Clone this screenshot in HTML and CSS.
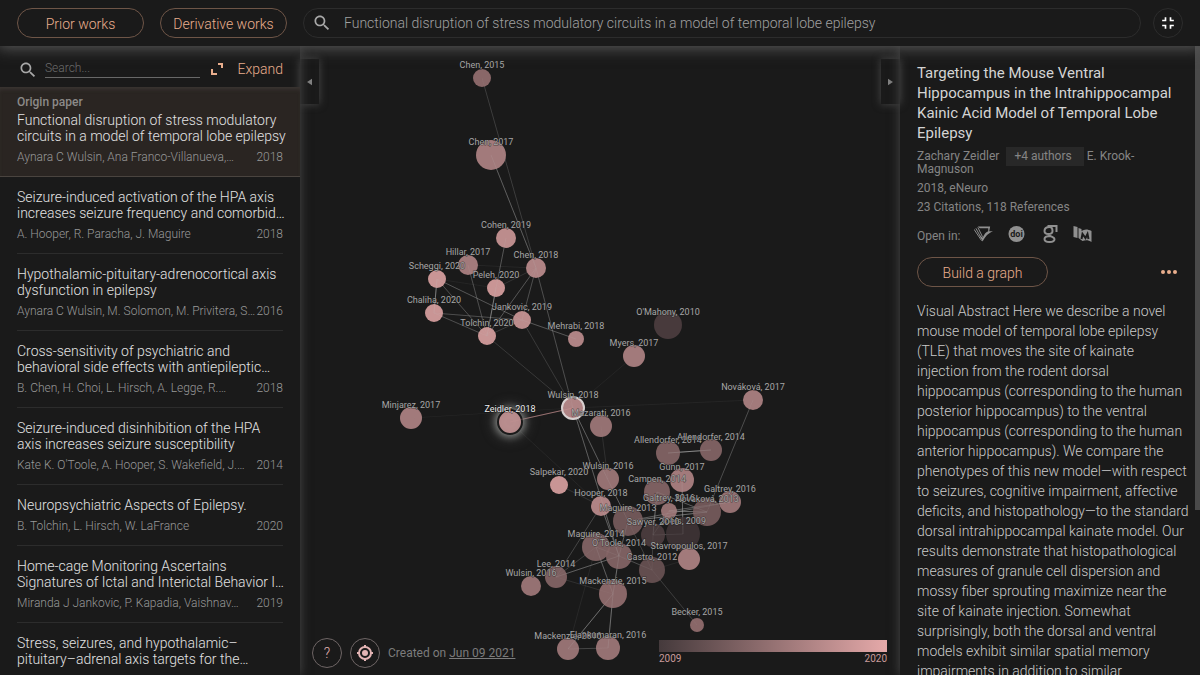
FILE: index.html
```
<!DOCTYPE html>
<html lang="en">
<head>
    <meta charset="UTF-8">
    <meta name="viewport" content="width=device-width, initial-scale=1.0">
    <title>Connected papers graph</title>
    <link rel="stylesheet" href="styles.css">
</head>
<body>
    <header class="topbar">
        <button class="pill">Prior works</button>
        <button class="pill">Derivative works</button>
        <label class="main-search">
            <svg class="search-icon" viewBox="0 0 24 24"><path d="M15.5 14h-.79l-.28-.27C15.41 12.59 16 11.11 16 9.5 16 5.91 13.09 3 9.5 3S3 5.91 3 9.5 5.91 16 9.5 16c1.61 0 3.09-.59 4.23-1.57l.27.28v.79l5 4.99L20.49 19l-4.99-5zm-6 0C7.01 14 5 11.99 5 9.5S7.01 5 9.5 5 14 7.01 14 9.5 11.99 14 9.5 14z"/></svg>
            <input type="text" aria-label="Search papers" value="Functional disruption of stress modulatory circuits in a model of temporal lobe epilepsy">
        </label>
        <button class="round-button" aria-label="Exit full screen">
            <svg viewBox="0 0 24 24"><path d="M5 16h3v3h2v-5H5v2zm3-8H5v2h5V5H8v3zm6 11h2v-3h3v-2h-5v5zm2-11V5h-2v5h5V8h-3z"/></svg>
        </button>
    </header>

    <main>
        <aside class="sidebar">
            <div class="filter">
                <label class="filter-label">
                    <svg class="search-icon" viewBox="0 0 24 24"><path d="M15.5 14h-.79l-.28-.27C15.41 12.59 16 11.11 16 9.5 16 5.91 13.09 3 9.5 3S3 5.91 3 9.5 5.91 16 9.5 16c1.61 0 3.09-.59 4.23-1.57l.27.28v.79l5 4.99L20.49 19l-4.99-5zm-6 0C7.01 14 5 11.99 5 9.5S7.01 5 9.5 5 14 7.01 14 9.5 11.99 14 9.5 14z"/></svg>
                    <input type="text" aria-label="Filter list" placeholder="Search...">
                </label>
                <button class="expand">
                    <svg viewBox="0 0 12 12"><path d="M1 6v5h5M7 1h4v4"/></svg>
                    Expand
                </button>
            </div>
            <ul class="papers">
                <li class="paper origin">
                    <strong>Origin paper</strong>
                    <h3>Functional disruption of stress modulatory circuits in a model of temporal lobe epilepsy</h3>
                    <p><span>Aynara C Wulsin, Ana Franco-Villanueva,…</span><span>2018</span></p>
                </li>
                <li class="paper">
                    <h3>Seizure-induced activation of the HPA axis increases seizure frequency and comorbid…</h3>
                    <p><span>A. Hooper, R. Paracha, J. Maguire</span><span>2018</span></p>
                </li>
                <li class="paper">
                    <h3>Hypothalamic-pituitary-adrenocortical axis dysfunction in epilepsy</h3>
                    <p><span>Aynara C Wulsin, M. Solomon, M. Privitera, S…</span><span>2016</span></p>
                </li>
                <li class="paper">
                    <h3>Cross-sensitivity of psychiatric and behavioral side effects with antiepileptic…</h3>
                    <p><span>B. Chen, H. Choi, L. Hirsch, A. Legge, R.…</span><span>2018</span></p>
                </li>
                <li class="paper">
                    <h3>Seizure-induced disinhibition of the HPA<br>axis increases seizure susceptibility</h3>
                    <p><span>Kate K. O'Toole, A. Hooper, S. Wakefield, J.…</span><span>2014</span></p>
                </li>
                <li class="paper">
                    <h3>Neuropsychiatric Aspects of Epilepsy.</h3>
                    <p><span>B. Tolchin, L. Hirsch, W. LaFrance</span><span>2020</span></p>
                </li>
                <li class="paper">
                    <h3>Home-cage Monitoring Ascertains Signatures of Ictal and Interictal Behavior I…</h3>
                    <p><span>Miranda J Jankovic, P. Kapadia, Vaishnav…</span><span>2019</span></p>
                </li>
                <li class="paper">
                    <h3>Stress, seizures, and hypothalamic–<br>pituitary–adrenal axis targets for the…</h3>
                </li>
            </ul>
        </aside>

        <section class="graph">
            <svg id="graph" viewBox="300 46 600 629"></svg>
            <button class="collapse left" aria-label="Collapse list"><svg viewBox="0 0 6 8"><path d="M6 0v8L0 4z"/></svg></button>
            <button class="collapse right" aria-label="Collapse details"><svg viewBox="0 0 6 8"><path d="M0 0v8l6-4z"/></svg></button>
            <footer class="graph-footer">
                <button class="tool" aria-label="Help">?</button>
                <button class="tool" aria-label="Center graph">
                    <svg viewBox="0 0 18 18"><circle class="ring" cx="9" cy="9" r="6"/><circle cx="9" cy="9" r="3"/><path class="ring" d="M9 1v3M9 14v3M1 9h3M14 9h3"/></svg>
                </button>
                <span class="created">Created on <a href="#">Jun 09 2021</a></span>
                <div class="legend">
                    <div class="legend-bar"></div>
                    <div class="legend-years"><span>2009</span><span>2020</span></div>
                </div>
            </footer>
        </section>

        <aside class="details">
            <div class="details-body">
                <h2>Targeting the Mouse Ventral Hippocampus in the Intrahippocampal Kainic Acid Model of Temporal Lobe Epilepsy</h2>
                <p class="authors">Zachary Zeidler <button class="more-authors">+4 authors</button> E. Krook-Magnuson</p>
                <p>2018, eNeuro</p>
                <p>23 Citations, 118 References</p>
                <div class="open-in">
                    <span>Open in:</span>
                    <a href="#" aria-label="Semantic Scholar">
                        <svg viewBox="0 0 20 18"><path class="line" d="M0 4l8 12M2 3l6 11M4 2l5 10"/><path d="M4 1h13l-1 5 4 0C15 8 12 11 9 17L6 10l3 3c2-4 3-6 6-7V3H6z"/></svg>
                    </a>
                    <a href="#" aria-label="DOI">
                        <svg viewBox="0 0 18 18"><circle cx="9" cy="9" r="8"/><text x="9" y="12">doi</text></svg>
                    </a>
                    <a href="#" aria-label="Google Scholar">
                        <svg viewBox="0 0 18 18"><path class="bold" d="M9 2c-3 0-5 1-5 4 0 2 2 3 4 3s4-1 4-3-1-4-3-4zM7 1h9v6M9 9c-2 2 5 3 5 5 0 4-10 4-10 0 0-2 3-3 6-3"/></svg>
                    </a>
                    <a href="#" aria-label="PubMed">
                        <svg viewBox="0 0 18 18"><path d="M0 1l4 1v11l-4-1zM5 3l3 1v2c3-2 6-2 10 0v11c-3-2-6-2-9-1l-4-3z"/><path class="cut" d="M8 14l1-5 3 4 2-4 1 5"/></svg>
                    </a>
                </div>
                <div class="actions">
                    <button class="pill">Build a graph</button>
                    <button class="dots" aria-label="More options"><svg viewBox="0 0 17 5"><circle cx="2" cy="2" r="2"/><circle cx="8" cy="2" r="2"/><circle cx="14" cy="2" r="2"/></svg></button>
                </div>
                <p class="abstract">Visual Abstract Here we describe a novel mouse model of temporal lobe epilepsy (TLE) that moves the site of kainate<br>injection from the rodent dorsal<br>hippocampus (corresponding to the human posterior hippocampus) to the ventral hippocampus (corresponding to the human anterior hippocampus). We compare the phenotypes of this new model—with respect to seizures, cognitive impairment, affective deficits, and histopathology—to the standard dorsal intrahippocampal kainate model. Our results demonstrate that histopathological measures of granule cell dispersion and mossy fiber sprouting maximize near the site of kainate injection. Somewhat surprisingly, both the dorsal and ventral models exhibit similar spatial memory impairments in addition to similar</p>
            </div>
            <div class="scroll-thumb"></div>
        </aside>
    </main>
    <script src="script.js"></script>
</body>
</html>
```
FILE: styles.css
```
* {
    box-sizing: border-box;
}

body {
    margin: 0;
    height: 100vh;
    display: flex;
    flex-direction: column;
    overflow: hidden;
    background: #1a1a1a;
    color: #e2e2e2;
    font-family: Roboto, sans-serif;
    font-size: 14px;
    font-weight: 300;
}

button {
    font: inherit;
    color: #e9ae8d;
    background: none;
    border: none;
    padding: 0;
    cursor: pointer;
}

input {
    font: inherit;
    background: none;
    border: none;
    outline: none;
    padding: 0;
    min-width: 0;
}

h2, h3, p, ul {
    margin: 0;
    padding: 0;
    font-weight: inherit;
}

svg {
    display: block;
    fill: currentColor;
}

/* Top bar */
.topbar {
    display: flex;
    align-items: center;
    height: 46px;
    padding: 0 17px;
    flex-shrink: 0;
    background: #1a1a1a;
    box-shadow: 0 0 14px 2px #5a5a5a;
    position: relative;
    z-index: 5;
}

.pill {
    height: 30px;
    padding: 2px 12px 0;
    min-width: 127px;
    border: 1px solid #6e5547;
    border-radius: 15px;
}

.topbar .pill {
    margin-right: 16px;
}

.main-search {
    display: flex;
    align-items: center;
    gap: 12px;
    flex: 1;
    height: 30px;
    padding: 0 8px;
    border: 1px solid #2c2c2c;
    border-radius: 15px;
}

.main-search input {
    flex: 1;
    color: #a0a0a0;
}

.search-icon {
    width: 20px;
    height: 20px;
    color: #a8a8a8;
    flex-shrink: 0;
}

.round-button {
    display: flex;
    align-items: center;
    justify-content: center;
    width: 30px;
    height: 30px;
    margin-left: 12px;
    border: 1px solid #2c2c2c;
    border-radius: 50%;
    color: #fff;
}

.round-button svg {
    width: 20px;
    height: 20px;
}

main {
    display: flex;
    flex: 1;
    min-height: 0;
}

/* Paper list */
.sidebar {
    width: 25%;
    overflow: hidden;
    box-shadow: 0 0 10px #4a4a4a;
    z-index: 2;
}

.filter {
    display: flex;
    align-items: center;
    justify-content: space-between;
    height: 41px;
    padding: 4px 17px 0 18px;
}

.filter-label {
    display: flex;
    flex: 1;
    min-width: 0;
    gap: 7px;
    margin: 3px 11px 0 0;
}

.filter-label input {
    flex: 1;
    height: 18px;
    padding-bottom: 2px;
    border-bottom: 1px solid #686868;
    font-size: 12px;
    color: #dcdcdc;
}

.filter-label input::placeholder {
    color: #6c6c6c;
}

.expand {
    display: flex;
    align-items: center;
    gap: 14px;
}

.expand svg {
    width: 12px;
    height: 12px;
    fill: none;
    stroke: currentColor;
    stroke-width: 2;
}

.papers {
    list-style: none;
}

.paper {
    margin: 0 17px;
    padding: 12px 0 11px;
    border-bottom: 1px solid #2c2c2c;
}

.paper.origin {
    margin: 0;
    padding: 7px 17px 11px;
    background: #2a2522;
    border-color: #4a443f;
    box-shadow: inset 0 4px 4px -2px #3c3734;
}

.paper strong {
    display: block;
    margin-bottom: 2px;
    font-size: 12px;
    line-height: 16px;
    font-weight: 500;
    color: #8c8a88;
}

/* Titles may run slightly into the side padding */
.paper h3 {
    margin-right: -8px;
    font-size: 14px;
    line-height: 16px;
}

.paper p {
    display: flex;
    justify-content: space-between;
    margin-top: 5px;
    font-size: 12px;
    line-height: 16px;
    color: #989898;
    white-space: nowrap;
}

/* Graph */
.graph {
    flex: 1;
    min-width: 0;
    position: relative;
}

#graph {
    width: 100%;
    height: 100%;
}

.link {
    stroke: #a9a9a9;
}

.link.selected {
    stroke: #d49a9a;
}

.node {
    fill-opacity: 0.92;
}

.node.origin {
    stroke: #d8d0d0;
    stroke-width: 2;
}

.node.selected {
    stroke: #1a1a1a;
    stroke-width: 2;
    filter: drop-shadow(0 0 4px #9a9e9a) drop-shadow(0 0 6px #666);
}

.node-label {
    font-size: 9px;
    font-weight: 400;
    text-anchor: middle;
    fill: #a6a6a6;
    stroke: #1a1a1a;
    stroke-width: 1;
    stroke-opacity: 0.6;
    paint-order: stroke;
}

.node-label.selected {
    fill: #eee;
    stroke: #000;
}

.collapse {
    position: absolute;
    top: 13px;
    width: 19px;
    height: 45px;
    display: flex;
    align-items: center;
    justify-content: center;
    color: #808080;
    background: #1a1a1a;
    box-shadow: 0 0 8px #4a4a4a;
}

.collapse svg {
    width: 5px;
    height: 8px;
}

.collapse.left {
    left: 0;
}

.collapse.right {
    right: 0;
}

.graph-footer {
    position: absolute;
    left: 12px;
    right: 13px;
    bottom: 7px;
    display: flex;
    align-items: center;
    gap: 8px;
}

.tool {
    display: flex;
    align-items: center;
    justify-content: center;
    width: 30px;
    height: 30px;
    border: 1px solid #6e6565;
    border-radius: 50%;
    color: #e3b4b4;
}

.tool svg {
    width: 18px;
    height: 18px;
}

.ring {
    fill: none;
    stroke: currentColor;
    stroke-width: 2;
}

.created {
    font-size: 12px;
    font-weight: 400;
    color: #7c7c7c;
}

.created a {
    color: inherit;
}

.legend {
    width: 228px;
    margin-left: auto;
}

.legend-bar {
    height: 12px;
    background: linear-gradient(to right, #453a3c, #e5a9a9);
}

.legend-years {
    display: flex;
    justify-content: space-between;
    font-size: 10px;
    font-weight: 400;
    line-height: 14px;
    color: #c99a9a;
}

/* Details panel */
.details {
    width: 25%;
    display: flex;
    overflow: hidden;
    box-shadow: 0 0 10px #4a4a4a;
    z-index: 2;
}

.details-body {
    flex: 1;
    padding: 17px 4px 0 17px;
    font-size: 12px;
    font-weight: 400;
    color: #858585;
}

.details h2 {
    font-size: 15px;
    line-height: 20px;
    color: #d4d4d4;
}

.details-body p {
    line-height: 19px;
}

.details-body .authors {
    padding: 7px 40px 0 0;
    line-height: 13px;
    margin-bottom: 3px;
}

.more-authors {
    height: 19px;
    padding: 0 12px 0 8px;
    margin: -3px 0 -3px 4px;
    background: #282828;
    color: #858585;
}

.open-in {
    display: flex;
    align-items: center;
    gap: 14px;
    height: 28px;
    margin-top: 5px;
}

.open-in a {
    color: #909090;
    padding-bottom: 4px;
}

.open-in svg {
    width: 19px;
    height: 18px;
}

.open-in text {
    font-size: 9px;
    font-weight: 700;
    text-anchor: middle;
    fill: #1a1a1a;
}

.open-in .line,
.open-in .bold,
.open-in .cut {
    fill: none;
    stroke: currentColor;
}

.open-in .bold {
    stroke-width: 2;
}

.open-in .cut {
    stroke: #1a1a1a;
    stroke-width: 2;
}

.actions {
    display: flex;
    align-items: center;
    justify-content: space-between;
    margin-top: 7px;
    padding-right: 13px;
    font-size: 14px;
    font-weight: 300;
}

.actions .pill {
    min-width: 131px;
}

.dots svg {
    width: 17px;
    height: 5px;
}

.details-body .abstract {
    margin-top: 14px;
    font-size: 14px;
    font-weight: 300;
    line-height: 20px;
    color: #cacaca;
}

.scroll-thumb {
    width: 5px;
    height: 464px;
    background: #4a4a4a;
}
```
FILE: script.js
```
const SVG_NS = 'http://www.w3.org/2000/svg';
const graph = document.getElementById('graph');

// id: [author, year, x, y, radius], later nodes are drawn on top
const nodes = {
    joels: ['Joëls', 2009, 683, 534, 17],
    omahony: ["O'Mahony", 2010, 668, 325, 14],
    sawyer: ['Sawyer', 2010, 653, 535, 12],
    castro: ['Castro', 2012, 652, 570, 13],
    novakova13: ['Nováková', 2013, 707, 512, 14],
    maguire13: ['Maguire', 2013, 628, 521, 15],
    campen: ['Campen', 2014, 657, 492, 13],
    allendorfer1: ['Allendorfer', 2014, 668, 453, 12],
    allendorfer2: ['Allendorfer', 2014, 711, 450, 11],
    maguire14: ['Maguire', 2014, 596, 547, 14],
    otoole: ["O'Toole", 2014, 619, 556, 13],
    lee: ['Lee', 2014, 556, 577, 11],
    chen15: ['Chen', 2015, 482, 78, 9],
    mackenzie15: ['Mackenzie', 2015, 613, 594, 14],
    becker: ['Becker', 2015, 697, 625, 7],
    mazarati: ['Mazarati', 2016, 601, 426, 11],
    wulsin16: ['Wulsin', 2016, 608, 479, 11],
    wulsin16b: ['Wulsin', 2016, 531, 586, 10],
    mackenzie16: ['Mackenzie', 2016, 568, 649, 11],
    elankumaran: ['Elankumaran', 2016, 608, 648, 12],
    galtrey1: ['Galtrey', 2016, 669, 511, 8],
    galtrey2: ['Galtrey', 2016, 730, 502, 11],
    chen17: ['Chen', 2017, 491, 155, 15],
    hillar: ['Hillar', 2017, 468, 265, 10],
    myers: ['Myers', 2017, 634, 356, 11],
    minjarez: ['Minjarez', 2017, 411, 418, 11],
    novakova17: ['Nováková', 2017, 753, 400, 10],
    gunn: ['Gunn', 2017, 682, 480, 12],
    stavropoulos: ['Stavropoulos', 2017, 689, 559, 11],
    chen18: ['Chen', 2018, 536, 268, 10],
    mehrabi: ['Mehrabi', 2018, 576, 339, 8],
    wulsin18: ['Wulsin', 2018, 573, 408, 11],
    zeidler: ['Zeidler', 2018, 510, 422, 12],
    hooper: ['Hooper', 2018, 601, 506, 10],
    cohen: ['Cohen', 2019, 506, 238, 10],
    jankovic: ['Jankovic', 2019, 522, 320, 9],
    scheggi: ['Scheggi', 2020, 437, 279, 9],
    peleh: ['Peleh', 2020, 496, 288, 9],
    chaliha: ['Chaliha', 2020, 434, 313, 9],
    tolchin: ['Tolchin', 2020, 487, 336, 9],
    salpekar: ['Salpekar', 2020, 559, 485, 9]
};

// [from, to, strength]
const links = [
    ['chen15', 'chen18', 0.2], ['chen17', 'chen18', 0.4], ['cohen', 'peleh', 0.35],
    ['peleh', 'tolchin', 0.6], ['hillar', 'tolchin', 0.3], ['hillar', 'chen18', 0.08],
    ['scheggi', 'chaliha', 0.6], ['scheggi', 'jankovic', 0.35], ['scheggi', 'tolchin', 0.3],
    ['scheggi', 'peleh', 0.06], ['chaliha', 'jankovic', 0.3], ['chaliha', 'tolchin', 0.3],
    ['peleh', 'chen18', 0.15], ['chen18', 'tolchin', 0.35], ['chen18', 'jankovic', 0.3],
    ['chen18', 'wulsin18', 0.3], ['tolchin', 'jankovic', 0.2], ['jankovic', 'mehrabi', 0.35],
    ['jankovic', 'wulsin18', 0.18], ['tolchin', 'wulsin18', 0.18], ['myers', 'wulsin18', 0.06],
    ['zeidler', 'wulsin18', 0.6], ['minjarez', 'wulsin18', 0.05], ['zeidler', 'hooper', 0.07],
    ['wulsin18', 'novakova17', 0.06], ['wulsin18', 'maguire13', 0.4],
    ['wulsin18', 'otoole', 0.4], ['mazarati', 'wulsin16', 0.12], ['salpekar', 'hooper', 0.15],
    ['novakova17', 'novakova13', 0.3], ['allendorfer1', 'allendorfer2', 0.7],
    ['hooper', 'lee', 0.25], ['hooper', 'otoole', 0.4],
    ['maguire13', 'otoole', 0.4], ['maguire13', 'novakova13', 0.5], ['maguire13', 'galtrey2', 0.4],
    ['campen', 'sawyer', 0.5], ['campen', 'novakova13', 0.4], ['gunn', 'joels', 0.5],
    ['galtrey1', 'novakova13', 0.5], ['galtrey1', 'galtrey2', 0.4], ['sawyer', 'joels', 0.3],
    ['sawyer', 'castro', 0.2], ['maguire13', 'castro', 0.2], ['galtrey1', 'sawyer', 0.3],
    ['maguire14', 'lee', 0.2], ['maguire14', 'mackenzie15', 0.4], ['otoole', 'lee', 0.4],
    ['otoole', 'maguire14', 0.3], ['otoole', 'mackenzie15', 0.5], ['otoole', 'castro', 0.3],
    ['lee', 'mackenzie15', 0.12], ['mackenzie15', 'mackenzie16', 0.5],
    ['mackenzie15', 'elankumaran', 0.5], ['mackenzie16', 'elankumaran', 0.25],
    ['castro', 'becker', 0.2], ['castro', 'stavropoulos', 0.08], ['maguire14', 'mackenzie16', 0.08]
];

function draw(tag, attributes, text) {
    const element = document.createElementNS(SVG_NS, tag);
    for (const key in attributes) {
        element.setAttribute(key, attributes[key]);
    }
    if (text) {
        element.textContent = text;
    }
    graph.append(element);
}

// Dark for old papers, pink for recent ones
function yearColor(year) {
    const t = (year - 2009) / 11;
    const old = [62, 51, 53];
    const recent = [216, 160, 160];
    return `rgb(${old.map((c, i) => Math.round(c + (recent[i] - c) * t)).join(',')})`;
}

function state(id) {
    if (id === 'zeidler') return ' selected';
    if (id === 'wulsin18') return ' origin';
    return '';
}

function drawLink([from, to, strength], fade) {
    const [, , x1, y1] = nodes[from];
    const [, , x2, y2] = nodes[to];
    const selected = from === 'zeidler' && to === 'wulsin18' ? ' selected' : '';
    draw('line', { class: 'link' + selected, x1, y1, x2, y2, 'stroke-opacity': strength * fade });
}

links.forEach(link => drawLink(link, 1));

for (const id in nodes) {
    const [, year, cx, cy, r] = nodes[id];
    draw('circle', { class: 'node' + state(id), cx, cy, r, fill: yearColor(year) });
}

// Faint second pass so the links stay visible across the nodes
links.forEach(link => drawLink(link, 0.3));

for (const id in nodes) {
    const [author, year, x, y] = nodes[id];
    draw('text', { class: 'node-label' + state(id), x, y: y - 10 }, `${author}, ${year}`);
}
```
